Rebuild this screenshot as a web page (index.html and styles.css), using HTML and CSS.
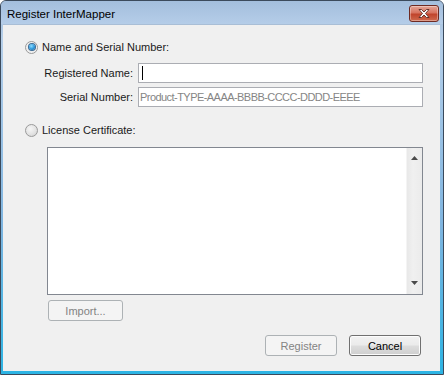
FILE: index.html
```html
<!DOCTYPE html>
<html>
<head>
<meta charset="utf-8">
<link rel="stylesheet" href="styles.css">
</head>
<body>
<div class="window">
  <div class="titlebar">
    <span class="title">Register InterMapper</span>
    <button class="close" aria-label="Close">
      <svg width="16" height="11" viewBox="0 0 16 11">
        <path d="M3 1.5 L5.5 1.5 L8 4 L10.5 1.5 L13 1.5 L9.5 5.5 L13 9.5 L10.5 9.5 L8 7 L5.5 9.5 L3 9.5 L6.5 5.5 Z" fill="#ffffff" stroke="#5a2a22" stroke-width="0.9" stroke-linejoin="round"/>
      </svg>
    </button>
  </div>
  <div class="client">
    <label class="radio-row first">
      <span class="radio checked"></span>
      <span class="label">Name and Serial Number:</span>
    </label>
    <div class="fields">
      <span class="field-label">Registered Name:</span>
      <div class="input"><span class="caret"></span></div>
      <span class="field-label">Serial Number:</span>
      <div class="input"><span class="placeholder">Product-TYPE-AAAA-BBBB-CCCC-DDDD-EEEE</span></div>
    </div>
    <label class="radio-row second">
      <span class="radio"></span>
      <span class="label">License Certificate:</span>
    </label>
    <div class="textarea">
      <div class="text-body"></div>
      <div class="scrollbar">
        <svg class="arrow" width="7" height="4" viewBox="0 0 7 4"><path d="M0 4 L3.5 0 L7 4 Z" fill="#4a4a4a"/></svg>
        <svg class="arrow" width="7" height="4" viewBox="0 0 7 4"><path d="M0 0 L7 0 L3.5 4 Z" fill="#4a4a4a"/></svg>
      </div>
    </div>
    <div class="import-row">
      <button class="btn disabled">Import...</button>
    </div>
    <div class="actions">
      <button class="btn disabled">Register</button>
      <button class="btn default">Cancel</button>
    </div>
  </div>
</div>
</body>
</html>
```
FILE: styles.css
```css
* { box-sizing: border-box; }
html, body {
  margin: 0;
  padding: 0;
  width: 444px;
  height: 375px;
  overflow: hidden;
  background: #ffffff;
}
body {
  font-family: "Liberation Sans", Arial, sans-serif;
  font-size: 11px;
  color: #1a1a1a;
}
.window {
  width: 444px;
  height: 375px;
  border: 1px solid #3b4a5c;
  border-radius: 6px 6px 0 0;
  background: linear-gradient(180deg, #9fbbdb 0%, #b6cfe9 10%, #7fb5e0 60%, #2cb4e4 100%);
  display: flex;
  flex-direction: column;
  overflow: hidden;
}
.titlebar {
  height: 23px;
  flex: none;
  display: flex;
  align-items: center;
  justify-content: space-between;
  padding: 0 4px 0 6px;
  background: linear-gradient(180deg, #a3bedd 0%, #b5cde8 100%);
}
.title {
  font-size: 11.5px;
  color: #000;
  margin-top: 2px;
}
.close {
  width: 30px;
  height: 17px;
  margin-top: 1px;
  padding: 0;
  border: 1px solid #6e2a22;
  border-radius: 3px;
  background: linear-gradient(180deg, #e4a597 0%, #d7735f 45%, #c0442c 55%, #cf6a4e 100%);
  box-shadow: inset 0 0 0 1px rgba(255,255,255,0.35);
  display: flex;
  align-items: center;
  justify-content: center;
}
.close svg { display: block; }
.client {
  flex: 1;
  margin: 0 3px 3px 2px;
  background: #f0f0f0;
  border-top: 1px solid #a9bed6;
  display: flex;
  flex-direction: column;
  padding: 0 17px 0 0;
}
.radio-row {
  display: flex;
  align-items: center;
  height: 16px;
  padding-left: 22px;
  gap: 4px;
}
.radio-row.first { margin-top: 14px; }
.radio-row.second { margin-top: 15px; }
.radio {
  width: 13px;
  height: 13px;
  border-radius: 50%;
  border: 1px solid #9a9a9a;
  background: radial-gradient(circle at 40% 35%, #f6f6f6 0%, #e3e3e3 55%, #cdcdcd 100%);
  display: flex;
  align-items: center;
  justify-content: center;
}
.radio.checked {
  background: radial-gradient(circle at 50% 50%, #dcdcdc 0%, #f2f2f2 70%, #e0e0e0 100%);
}
.radio.checked::after {
  content: "";
  width: 6px;
  height: 6px;
  border-radius: 50%;
  background: radial-gradient(circle at 40% 35%, #8fdcff 0%, #2a98dc 55%, #12558f 100%);
  box-shadow: 0 0 0 1px #3a6a95;
}
.fields {
  display: grid;
  grid-template-columns: 130px 1fr;
  column-gap: 5px;
  row-gap: 4px;
  margin-top: 8px;
}
.field-label {
  text-align: right;
  align-self: center;
}
.input {
  height: 20px;
  border: 1px solid #abadb3;
  background: #ffffff;
  display: flex;
  align-items: center;
  padding-left: 1px;
}
.caret {
  width: 1px;
  height: 14px;
  background: #000;
  margin-left: 2px;
}
.placeholder {
  color: #858585;
  letter-spacing: -0.55px;
}
.textarea {
  margin-top: 9px;
  margin-left: 44px;
  height: 148px;
  border: 1px solid #828790;
  background: #ffffff;
  display: flex;
}
.text-body { flex: 1; }
.scrollbar {
  width: 16px;
  background: linear-gradient(90deg, #e8e8e8, #f0f0f0 40%, #ebebeb);
  border-left: 1px solid #f4f4f4;
  display: flex;
  flex-direction: column;
  justify-content: space-between;
  align-items: center;
  padding: 8px 0 9px;
}
.arrow { display: block; }
.import-row {
  margin-top: 5px;
  padding-left: 45px;
}
.btn {
  font-family: "Liberation Sans", Arial, sans-serif;
  font-size: 11px;
  height: 21px;
  border-radius: 3px;
  padding: 0;
}
.import-row .btn { width: 75px; }
.btn.disabled {
  border: 1px solid #adb2b5;
  background: #f4f4f4;
  color: #838383;
}
.btn.default {
  border: 1px solid #707070;
  background: linear-gradient(180deg, #f2f2f2 0%, #ebebeb 48%, #dddddd 52%, #cfcfcf 100%);
  box-shadow: inset 0 0 0 1px #fcfcfc;
  color: #000;
}
.actions {
  display: flex;
  justify-content: flex-end;
  gap: 12px;
  margin-top: 14px;
  padding-right: 2px;
}
.actions .btn { width: 72px; }
```
